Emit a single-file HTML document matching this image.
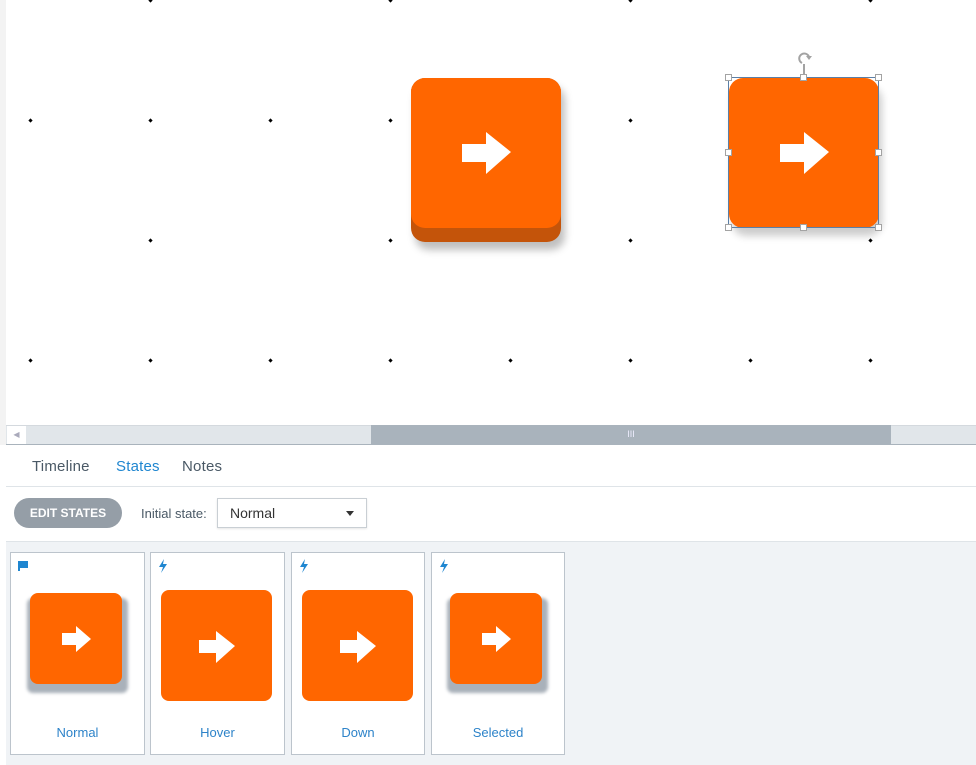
<!DOCTYPE html>
<html><head><style>
*{margin:0;padding:0;box-sizing:border-box}
body{width:976px;height:765px;position:relative;overflow:hidden;background:#fff;font-family:"Liberation Sans",sans-serif}
.a{position:absolute}
.d{position:absolute;width:3px;height:3px;background:#000;transform:rotate(45deg)}
.h{position:absolute;width:7px;height:7px;background:#fff;border:1.5px solid #a3a3a3}
.card{position:absolute;top:552px;height:203px;background:#fff;border:1px solid #bcc4cc}
.lbl{position:absolute;bottom:14px;width:100%;text-align:center;color:#2d83c9;font-size:13px}
.ob{position:absolute;background:#ff6600;border-radius:8px}
</style></head><body>
<div class="a" style="left:0;top:0;width:6px;height:445px;background:#f3f3f3"></div>
<div id="dots"></div>
<div class="a" style="left:411px;top:78px;width:150px;height:164px;border-radius:14px;background:#c4540a;box-shadow:4px 8px 8px rgba(0,0,0,.25)"></div>
<div class="a" style="left:411px;top:78px;width:150px;height:150px;border-radius:14px;background:#ff6600"></div>
<svg class="a" style="left:411px;top:78px" width="150" height="150"><path d="M51 66H75V54L100 74L75 96V84H51Z" fill="#fff"/></svg>
<div class="a" style="left:729px;top:78px;width:150px;height:150px;border-radius:14px;background:#ff6600;box-shadow:3px 8px 8px rgba(0,0,0,.2)"></div>
<svg class="a" style="left:729px;top:78px" width="150" height="150"><path d="M51 66H75V54L100 74L75 96V84H51Z" fill="#fff"/></svg>
<div class="a" style="left:728px;top:77px;width:151px;height:151px;border:1px solid #5b7fa6"></div>
<div class="a" style="left:803px;top:64px;width:2px;height:12px;background:#a3a3a3"></div>
<svg class="a" style="left:796px;top:50px" width="20" height="16"><path d="M6 13A5 5 0 1 1 13 7" fill="none" stroke="#a3a3a3" stroke-width="2"/><path d="M10 6L16 6L13 10Z" fill="#a3a3a3"/></svg>
<div class="h" style="left:725px;top:74px"></div><div class="h" style="left:800px;top:74px"></div><div class="h" style="left:875px;top:74px"></div>
<div class="h" style="left:725px;top:149px"></div><div class="h" style="left:875px;top:149px"></div>
<div class="h" style="left:725px;top:224px"></div><div class="h" style="left:800px;top:224px"></div><div class="h" style="left:875px;top:224px"></div>
<div class="a" style="left:6px;top:425px;width:970px;height:20px;background:#e1e6ea;border-top:1px solid #d4d9de;border-bottom:1px solid #a9b3bc"></div>
<div class="a" style="left:7px;top:426px;width:19px;height:18px;background:#fff;color:#aab;font-size:8px;line-height:18px;text-align:center">◀</div>
<div class="a" style="left:371px;top:425px;width:520px;height:19px;background:#a9b3bc;color:#eef;font-size:9px;line-height:19px;text-align:center">III</div>
<div class="a" style="left:6px;top:445px;width:970px;height:42px;border-bottom:1px solid #dfe4e8"></div>
<div class="a" style="left:32px;top:458px;font-size:15px;color:#4a5966;letter-spacing:0.2px">Timeline</div>
<div class="a" style="left:116px;top:458px;font-size:15px;color:#1f86d0;letter-spacing:0.2px">States</div>
<div class="a" style="left:182px;top:458px;font-size:15px;color:#4a5966;letter-spacing:0.2px">Notes</div>
<div class="a" style="left:14px;top:498px;width:108px;height:30px;border-radius:15px;background:#959ea7;color:#fff;font-size:12px;font-weight:bold;line-height:30px;text-align:center">EDIT STATES</div>
<div class="a" style="left:141px;top:506px;font-size:13px;color:#4a5966">Initial state:</div>
<div class="a" style="left:217px;top:498px;width:150px;height:30px;border:1px solid #c9cfd4;box-shadow:0 1px 2px rgba(0,0,0,.1)"></div>
<div class="a" style="left:230px;top:505px;font-size:14px;color:#333">Normal</div>
<div class="a" style="left:346px;top:511px;border-left:4px solid transparent;border-right:4px solid transparent;border-top:5px solid #333"></div>
<div class="a" style="left:6px;top:541px;width:970px;height:224px;background:#f0f3f6;border-top:1px solid #dfe4e8"></div>
<div class="card" style="left:10px;width:135px"><svg class="a" style="left:7px;top:8px" width="10" height="10"><path d="M1 0V10M1 1H9V6H1" stroke="#1f86d0" stroke-width="2" fill="#1f86d0"/></svg><div class="lbl">Normal</div></div>
<div class="card" style="left:150px;width:135px"><svg class="a" style="left:7px;top:6px" width="10" height="14"><path d="M6 0L1 8H5L3 14L9 5H5Z" fill="#1f86d0"/></svg><div class="lbl">Hover</div></div>
<div class="card" style="left:291px;width:134px"><svg class="a" style="left:7px;top:6px" width="10" height="14"><path d="M6 0L1 8H5L3 14L9 5H5Z" fill="#1f86d0"/></svg><div class="lbl">Down</div></div>
<div class="card" style="left:431px;width:134px"><svg class="a" style="left:7px;top:6px" width="10" height="14"><path d="M6 0L1 8H5L3 14L9 5H5Z" fill="#1f86d0"/></svg><div class="lbl">Selected</div></div>
<div class="a" style="left:27px;top:598px;width:101px;height:95px;background:#a9b1ba;border-radius:6px;filter:blur(1.5px)"></div>
<div class="ob" style="left:30px;top:593px;width:92px;height:91px"></div>
<svg class="a" style="left:30px;top:593px" width="92" height="91"><path d="M32 40H46V33L61 46L46 59V52H32Z" fill="#fff"/></svg>
<div class="ob" style="left:161px;top:590px;width:111px;height:111px"></div>
<svg class="a" style="left:161px;top:590px" width="111" height="111"><path d="M38 50H55V41L74 56L55 73V63H38Z" fill="#fff"/></svg>
<div class="ob" style="left:302px;top:590px;width:111px;height:111px"></div>
<svg class="a" style="left:302px;top:590px" width="111" height="111"><path d="M38 50H55V41L74 56L55 73V63H38Z" fill="#fff"/></svg>
<div class="a" style="left:447px;top:598px;width:101px;height:95px;background:#a9b1ba;border-radius:6px;filter:blur(1.5px)"></div>
<div class="ob" style="left:450px;top:593px;width:92px;height:91px"></div>
<svg class="a" style="left:450px;top:593px" width="92" height="91"><path d="M32 40H46V33L61 46L46 59V52H32Z" fill="#fff"/></svg>
<script>
var s='';
[[0,150,240],[120,30,120],[240,150,240],[360,30,120]].forEach(function(r){for(var x=r[1];x<976;x+=r[2]){s+='<div class="d" style="left:'+(x-1)+'px;top:'+(r[0]-1)+'px"></div>';}});
document.getElementById('dots').innerHTML=s;
</script>
</body></html>
